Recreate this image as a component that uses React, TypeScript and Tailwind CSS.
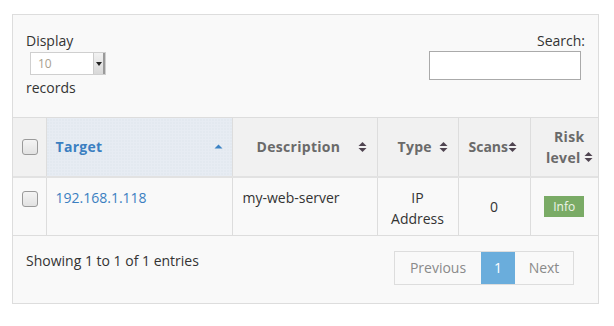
import React from "react";

const Both = () => (
  <svg width="9" height="12" viewBox="0 0 9 12" className="shrink-0">
    <path d="M4.5 1 L8.5 5 L0.5 5 Z" fill="#4f4450" />
    <path d="M4.5 11 L8.5 7 L0.5 7 Z" fill="#4f4450" />
  </svg>
);

const Up = () => (
  <svg width="9" height="6" viewBox="0 0 9 6" className="shrink-0">
    <path d="M4.5 0.5 L8.5 4.5 L0.5 4.5 Z" fill="#3b82c4" />
  </svg>
);

const Check = () => (
  <div className="w-[16px] h-[16px] rounded-[3px] border border-[#9a9a9a] bg-[linear-gradient(#f4f4f4,#e2e2e2)]" />
);

export default function App() {
  return (
    <div
      className="w-[614px] h-[326px] bg-white pt-[14px] pl-[12px]"
      style={{ fontFamily: '"Open Sans", "Noto Sans", sans-serif' }}
    >
      <div className="w-[587px] h-[290px] border border-[#dddddd] bg-[#f9f9f9] text-[14px] leading-[20px] text-[#333]">
        {/* controls */}
        <div className="h-[102px] flex justify-between pl-[13px] pr-[13px] pt-[16px]">
          <div className="flex flex-col">
            <span>Display</span>
            <div className="ml-[4px] mt-[1px] w-[76px] h-[23px] border border-[#cfcfcf] bg-white flex items-stretch">
              <span className="flex-1 pl-[7px] text-[12px] leading-[21px] text-[#a8a090]">10</span>
              <div className="w-[12px] bg-[linear-gradient(#f2f2f2,#d8d8d8)] border-l border-r-2 border-r-[#9a9a9a] border-l-[#cccccc] flex items-center justify-center">
                <svg width="6" height="4" viewBox="0 0 6 4">
                  <path d="M0 0 L6 0 L3 4 Z" fill="#222" />
                </svg>
              </div>
            </div>
            <span className="mt-[3px]">records</span>
          </div>
          <div className="flex flex-col items-end">
            <span>Search:</span>
            <div className="mr-[4px] w-[152px] h-[29px] border border-[#aaaaaa] bg-white" />
          </div>
        </div>

        <table className="w-[585px] table-fixed border-collapse">
          <colgroup>
            <col className="w-[33px]" />
            <col className="w-[186px]" />
            <col className="w-[145px]" />
            <col className="w-[81px]" />
            <col className="w-[72px]" />
            <col className="w-[68px]" />
          </colgroup>
          <thead>
            <tr className="h-[59px] border-t border-[#dddddd] border-b-2 border-b-[#e2e2e2] bg-[#f1f1f1] text-[#6a6a6a] font-bold text-[14px] leading-[21px] tracking-[0.3px]">
              <th className="p-0 align-middle">
                <div className="pl-[9px]"><Check /></div>
              </th>
              <th className="p-0 border-l border-[#dddddd] bg-[#e7ecf3] bg-[radial-gradient(#d7dee8_0.7px,transparent_0.8px)] bg-[length:3px_3px]">
                <div className="flex items-center justify-between pl-[9px] pr-[9px] text-[#3b7fc1]">
                  <span>Target</span>
                  <Up />
                </div>
              </th>
              <th className="p-0 border-l border-[#dddddd]">
                <div className="flex items-center justify-between pl-[24px] pr-[10px]">
                  <span>Description</span>
                  <Both />
                </div>
              </th>
              <th className="p-0 border-l border-[#dddddd]">
                <div className="flex items-center justify-between pl-[20px] pr-[10px]">
                  <span>Type</span>
                  <Both />
                </div>
              </th>
              <th className="p-0 border-l border-[#dddddd]">
                <div className="flex items-center pl-[10px] tracking-[0px]">
                  <span>Scans</span>
                  <Both />
                </div>
              </th>
              <th className="p-0 border-l border-[#dddddd] text-center">
                <div className="flex flex-col items-center pl-[10px]">
                  <span>Risk</span>
                  <span className="flex items-center gap-[3px]">
                    level <Both />
                  </span>
                </div>
              </th>
            </tr>
          </thead>
          <tbody>
            <tr className="h-[59px] border-b border-[#dddddd] text-[14px] leading-[21px]">
              <td className="p-0 align-top pt-[13px]">
                <div className="pl-[9px]"><Check /></div>
              </td>
              <td className="p-0 align-top pt-[9px] pl-[9px] border-l border-[#dddddd] text-[#3b7fc1]">
                192.168.1.118
              </td>
              <td className="p-0 align-top pt-[9px] pl-[10px] border-l border-[#dddddd]">
                my-web-server
              </td>
              <td className="p-0 align-top pt-[9px] text-center border-l border-[#dddddd]">
                IP
                <br />
                Address
              </td>
              <td className="p-0 align-middle text-center border-l border-[#dddddd]">0</td>
              <td className="p-0 align-middle text-center border-l border-[#dddddd]">
                <span className="inline-block px-[9px] h-[21px] leading-[21px] text-[12px] bg-[#7aab66] text-[#eef5ea]">
                  Info
                </span>
              </td>
            </tr>
          </tbody>
        </table>

        <div className="flex justify-between items-start pl-[13px] pr-[24px] pt-[15px]">
          <span>Showing 1 to 1 of 1 entries</span>
          <div className="flex h-[34px] border border-[#dddddd] text-[#8a8a8a] bg-[#f9f9f9]">
            <span className="w-[86px] flex items-center justify-center">Previous</span>
            <span className="w-[34px] flex items-center justify-center bg-[#6aaddc] text-white">1</span>
            <span className="w-[58px] flex items-center justify-center">Next</span>
          </div>
        </div>
      </div>
    </div>
  );
}
